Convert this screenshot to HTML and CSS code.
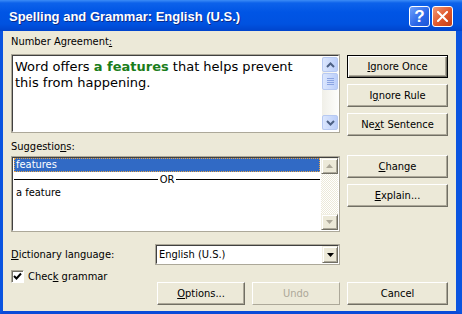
FILE: index.html
```html
<!DOCTYPE html>
<html lang="en">
  <head>
    <meta charset="UTF-8" />
    <title>Spelling and Grammar</title>
    <link rel="stylesheet" href="styles.css">
  </head>
  <body>
    <div class="window">
      <div class="titlebar">
        <span class="title">Spelling and Grammar: English (U.S.)</span>
        <div class="title-buttons">
          <span class="tbtn help">?</span>
          <span class="tbtn close">
            <svg width="11" height="11" viewBox="0 0 11 11"><path d="M1 1L10 10M10 1L1 10" stroke="#fff" stroke-width="2" stroke-linecap="square"/></svg>
          </span>
        </div>
      </div>

      <div class="content">
        <div class="main">
          <div class="left">
            <div class="label">Number Agreement<u>:</u></div>
            <div class="sentence-box">
              <div class="sentence">Word offers <b class="error">a features</b> that helps prevent this from happening.</div>
              <div class="xp-scroll">
                <span class="xp-btn">
                  <svg width="9" height="6" viewBox="0 0 9 6"><path d="M1 5L4.5 1.5L8 5" fill="none" stroke="#4d6185" stroke-width="2"/></svg>
                </span>
                <span class="xp-thumb">
                  <svg width="7" height="7" viewBox="0 0 7 7"><path d="M0 .5H7M0 2.5H7M0 4.5H7M0 6.5H7" stroke="#8ba4e2"/></svg>
                </span>
                <span class="xp-fill"></span>
                <span class="xp-btn">
                  <svg width="9" height="6" viewBox="0 0 9 6"><path d="M1 1L4.5 4.5L8 1" fill="none" stroke="#4d6185" stroke-width="2"/></svg>
                </span>
              </div>
            </div>

            <div class="label sugg-label">Suggestio<u>n</u>s:</div>
            <div class="list-box">
              <div class="list">
                <div class="item selected">features</div>
                <div class="or-sep"><span>OR</span></div>
                <div class="item">a feature</div>
              </div>
              <div class="classic-scroll">
                <span class="c-btn">
                  <svg width="7" height="4" viewBox="0 0 7 4"><path d="M3.5 0L7 4H0Z" fill="#aca899"/></svg>
                </span>
                <span class="c-track"></span>
                <span class="c-btn">
                  <svg width="7" height="4" viewBox="0 0 7 4"><path d="M0 0H7L3.5 4Z" fill="#aca899"/></svg>
                </span>
              </div>
            </div>
          </div>

          <div class="right">
            <div class="btn-group">
              <button class="btn default"><u>I</u>gnore Once</button>
              <button class="btn">I<u>g</u>nore Rule</button>
              <button class="btn">Ne<u>x</u>t Sentence</button>
            </div>
            <div class="btn-group second">
              <button class="btn"><u>C</u>hange</button>
              <button class="btn"><u>E</u>xplain...</button>
            </div>
          </div>
        </div>

        <div class="dict-row">
          <span class="label dict-label"><u>D</u>ictionary language:</span>
          <div class="select">
            <span class="select-text">English (U.S.)</span>
            <span class="drop-btn">
              <svg width="7" height="4" viewBox="0 0 7 4"><path d="M0 0H7L3.5 4Z" fill="#000"/></svg>
            </span>
          </div>
        </div>

        <div class="bottom-row">
          <label class="check">
            <span class="check-box">
              <svg width="9" height="9" viewBox="0 0 9 9"><path d="M1 4L3.5 6.5L8 1.5" fill="none" stroke="#000" stroke-width="2"/></svg>
            </span>
            <span>Chec<u>k</u> grammar</span>
          </label>
          <div class="bottom-buttons">
            <button class="btn small"><u>O</u>ptions...</button>
            <button class="btn small disabled">Undo</button>
            <button class="btn">Cancel</button>
          </div>
        </div>
      </div>
    </div>
  </body>
</html>
```

FILE: styles.css
```css
* {
  box-sizing: border-box;
}

body {
  margin: 0;
  font-family: "DejaVu Sans Condensed", "DejaVu Sans", Tahoma, sans-serif;
  font-size: 11px;
  color: #000;
}

.window {
  width: 462px;
  height: 314px;
  background-color: #ece9d8;
  border-left: 3px solid #0a54e0;
  border-right: 6px solid #0a54e0;
  border-bottom: 3px solid #0a4ad8;
  display: flex;
  flex-direction: column;
}

.titlebar {
  height: 31px;
  margin: 0 -6px 0 -3px;
  padding: 0 9px 0 9px;
  display: flex;
  align-items: center;
  justify-content: space-between;
  background: linear-gradient(#3c8cf6 0, #0d62ea 3px, #0055e5 12px, #0052e0 24px, #0044cc 31px);
}

.title {
  color: #fff;
  font-family: "Liberation Sans", Arial, sans-serif;
  font-weight: bold;
  font-size: 13px;
  text-shadow: 1px 1px #0a2a8a;
  padding-top: 2px;
}

.title-buttons {
  display: flex;
  gap: 2px;
  padding-top: 2px;
}

.tbtn {
  width: 21px;
  height: 21px;
  border: 1px solid #fff;
  border-radius: 3px;
  display: flex;
  align-items: center;
  justify-content: center;
}

.help {
  background: linear-gradient(135deg, #6da0fb, #2a66e8 60%, #1d55d6);
  color: #fff;
  font-family: "Liberation Sans", Arial, sans-serif;
  font-weight: bold;
  font-size: 17px;
}

.close {
  background: linear-gradient(135deg, #f29a78, #e0562a 55%, #c53f17);
}

.content {
  flex: 1;
  padding: 4px 8px 0 8px;
}

.main {
  display: flex;
  gap: 7px;
}

.left {
  width: 329px;
}

.label {
  line-height: 13px;
  height: 13px;
}

.sentence-box {
  margin-top: 6px;
  height: 79px;
  background-color: #fff;
  border: 2px solid;
  border-color: #404040 #fff #fff #404040;
  outline: 1px solid #aca899;
  outline-offset: -1px;
  display: flex;
  padding: 1px 0 1px 2px;
}

.sentence {
  flex: 1;
  font-family: "DejaVu Sans", Verdana, sans-serif;
  font-size: 13px;
  line-height: 16px;
  padding-top: 2px;
  padding-right: 8px;
}

.error {
  color: #1b7d1b;
}

.xp-scroll {
  width: 16px;
  display: flex;
  flex-direction: column;
  background: linear-gradient(to right, #f0efe8, #fdfdfb);
}

.xp-btn,
.xp-thumb {
  height: 15px;
  border: 1px solid #b7c9f2;
  border-radius: 2px;
  background: linear-gradient(to right, #dbe6fd, #bccffa);
  display: flex;
  align-items: center;
  justify-content: center;
}

.xp-thumb {
  height: 17px;
  margin-top: 1px;
}

.xp-fill {
  flex: 1;
}

.sugg-label {
  margin-top: 7px;
}

.list-box {
  margin-top: 3px;
  height: 76px;
  background-color: #fff;
  border: 2px solid;
  border-color: #404040 #fff #fff #404040;
  outline: 1px solid #aca899;
  outline-offset: -1px;
  display: flex;
}

.list {
  flex: 1;
  padding: 0 1px 0 1px;
}

.item {
  height: 14px;
  line-height: 14px;
  padding-left: 2px;
}

.selected {
  background-color: #316ac5;
  color: #fff;
  outline: 1px dotted #e6a447;
  outline-offset: -1px;
}

.or-sep {
  height: 14px;
  display: flex;
  align-items: center;
  gap: 2px;
}

.or-sep::before,
.or-sep::after {
  content: "";
  flex: 1;
  border-top: 1px solid #000;
}

.classic-scroll {
  width: 17px;
  display: flex;
  flex-direction: column;
}

.c-btn {
  height: 16px;
  background-color: #ece9d8;
  border: 1px solid;
  border-color: #f1efe2 #716f64 #716f64 #f1efe2;
  box-shadow: inset 1px 1px #fff, inset -1px -1px #aca899;
  display: flex;
  align-items: center;
  justify-content: center;
}

.c-track {
  flex: 1;
  background: repeating-conic-gradient(#ece9d8 0 25%, #fff 0 50%) 0 0 / 2px 2px;
}

.right {
  width: 101px;
  padding-top: 20px;
}

.btn-group {
  display: flex;
  flex-direction: column;
  gap: 6px;
}

.btn-group.second {
  margin-top: 19px;
}

.btn {
  height: 23px;
  width: 101px;
  padding: 0;
  font-family: inherit;
  font-size: 11px;
  color: #000;
  background-color: #ece9d8;
  border: 1px solid;
  border-color: #fff #716f64 #716f64 #fff;
  box-shadow: inset -1px -1px #aca899;
}

.btn.default {
  border-color: #000;
  box-shadow: inset 1px 1px #fff, inset -1px -1px #716f64, inset -2px -2px #aca899;
}

.btn.small {
  width: 88px;
}

.btn.disabled {
  color: #aca899;
  border-color: #fff #aca899 #aca899 #fff;
  box-shadow: none;
}

.dict-row {
  margin-top: 12px;
  display: flex;
  align-items: center;
}

.dict-label {
  width: 144px;
}

.select {
  width: 185px;
  height: 21px;
  background-color: #fff;
  border: 2px solid;
  border-color: #404040 #fff #fff #404040;
  outline: 1px solid #aca899;
  outline-offset: -1px;
  display: flex;
  align-items: center;
  padding: 0 0 0 2px;
}

.select-text {
  flex: 1;
}

.drop-btn {
  width: 16px;
  height: 17px;
  background-color: #ece9d8;
  border: 1px solid;
  border-color: #f1efe2 #716f64 #716f64 #f1efe2;
  box-shadow: inset 1px 1px #fff, inset -1px -1px #aca899;
  display: flex;
  align-items: center;
  justify-content: center;
}

.bottom-row {
  margin-top: 5px;
  display: flex;
  justify-content: space-between;
  align-items: flex-start;
}

.check {
  display: flex;
  align-items: center;
  gap: 4px;
  line-height: 13px;
}

.check-box {
  width: 13px;
  height: 13px;
  background-color: #fff;
  border: 1px solid;
  border-color: #aca899 #fff #fff #aca899;
  box-shadow: inset 1px 1px #716f64;
  display: flex;
  align-items: center;
  justify-content: center;
}

.bottom-buttons {
  margin-top: 12px;
  display: flex;
  gap: 7px;
}
```
